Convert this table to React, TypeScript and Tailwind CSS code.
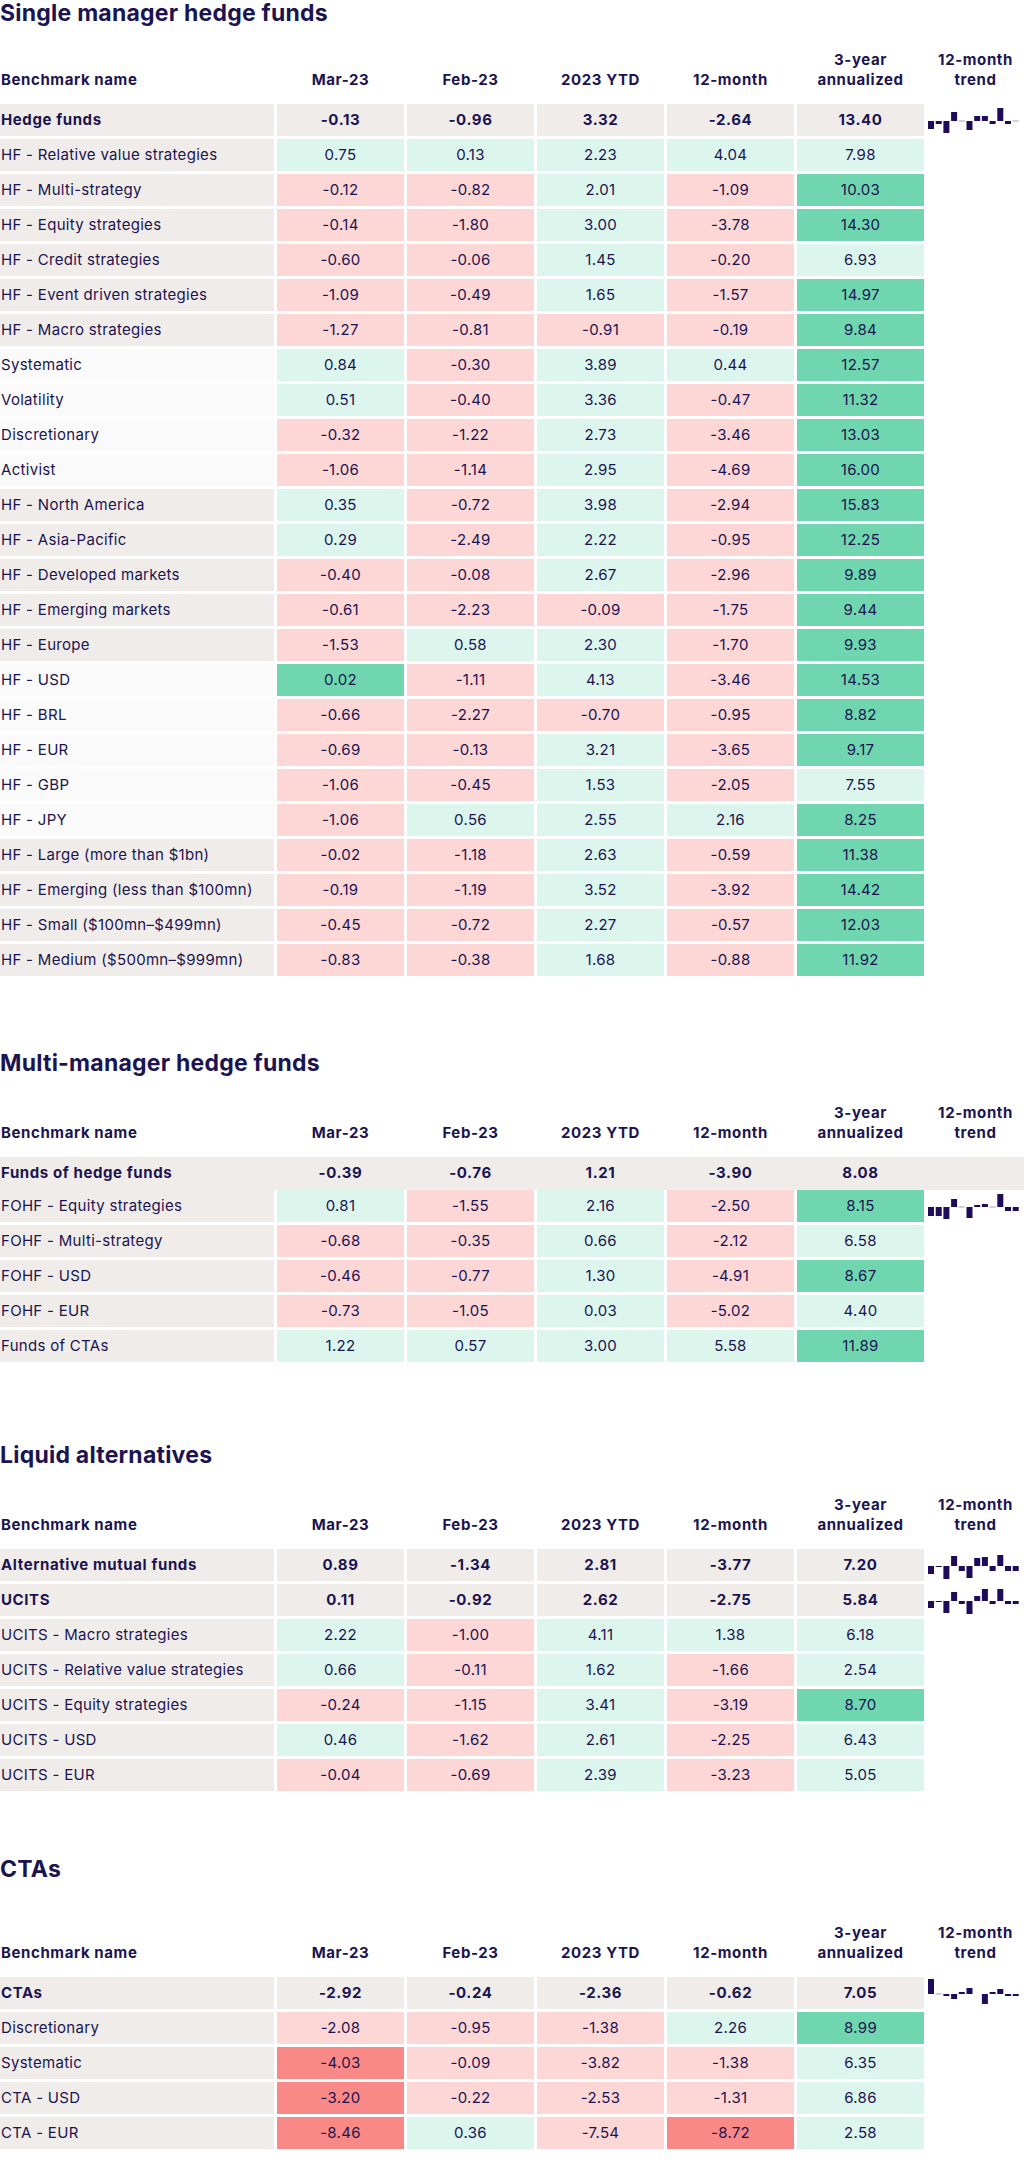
import clsx from "clsx"

type Row = {
  name: string
  vals: string[]
  codes?: string
  bold?: boolean
  light?: boolean
  spark?: (number | null)[]
}

type Section = {
  title: string
  mt: string
  headMt: string
  band?: boolean
  rows: Row[]
}

// m: mint, p: pink, G: green, r: red
const BG: Record<string, string> = {
  m: "bg-[#dcf6ed]",
  p: "bg-[#fdd6d6]",
  G: "bg-[#6fd6b0]",
  r: "bg-[#f98986]",
}

const GRID = "grid grid-cols-[274px_repeat(5,127px)_1fr] gap-x-[3px]"

const HEADERS = ["Mar-23", "Feb-23", "2023 YTD", "12-month"]

const SECTIONS: Section[] = [
  {
    title: "Single manager hedge funds",
    mt: "mt-0",
    headMt: "mt-[24px]",
    rows: [
      { name: "Hedge funds", vals: ["-0.13", "-0.96", "3.32", "-2.64", "13.40"], bold: true, spark: [-8, -3, -12, 9, 0, -9, 5, 5, -3, 13, -3, 0] },
      { name: "HF - Relative value strategies", vals: ["0.75", "0.13", "2.23", "4.04", "7.98"], codes: "mmmmm" },
      { name: "HF - Multi-strategy", vals: ["-0.12", "-0.82", "2.01", "-1.09", "10.03"], codes: "ppmpG" },
      { name: "HF - Equity strategies", vals: ["-0.14", "-1.80", "3.00", "-3.78", "14.30"], codes: "ppmpG" },
      { name: "HF - Credit strategies", vals: ["-0.60", "-0.06", "1.45", "-0.20", "6.93"], codes: "ppmpm" },
      { name: "HF - Event driven strategies", vals: ["-1.09", "-0.49", "1.65", "-1.57", "14.97"], codes: "ppmpG" },
      { name: "HF - Macro strategies", vals: ["-1.27", "-0.81", "-0.91", "-0.19", "9.84"], codes: "ppppG" },
      { name: "Systematic", vals: ["0.84", "-0.30", "3.89", "0.44", "12.57"], codes: "mpmmG", light: true },
      { name: "Volatility", vals: ["0.51", "-0.40", "3.36", "-0.47", "11.32"], codes: "mpmpG", light: true },
      { name: "Discretionary", vals: ["-0.32", "-1.22", "2.73", "-3.46", "13.03"], codes: "ppmpG", light: true },
      { name: "Activist", vals: ["-1.06", "-1.14", "2.95", "-4.69", "16.00"], codes: "ppmpG", light: true },
      { name: "HF - North America", vals: ["0.35", "-0.72", "3.98", "-2.94", "15.83"], codes: "mpmpG" },
      { name: "HF - Asia-Pacific", vals: ["0.29", "-2.49", "2.22", "-0.95", "12.25"], codes: "mpmpG" },
      { name: "HF - Developed markets", vals: ["-0.40", "-0.08", "2.67", "-2.96", "9.89"], codes: "ppmpG" },
      { name: "HF - Emerging markets", vals: ["-0.61", "-2.23", "-0.09", "-1.75", "9.44"], codes: "ppppG" },
      { name: "HF - Europe", vals: ["-1.53", "0.58", "2.30", "-1.70", "9.93"], codes: "pmmpG" },
      { name: "HF - USD", vals: ["0.02", "-1.11", "4.13", "-3.46", "14.53"], codes: "GpmpG", light: true },
      { name: "HF - BRL", vals: ["-0.66", "-2.27", "-0.70", "-0.95", "8.82"], codes: "ppppG", light: true },
      { name: "HF - EUR", vals: ["-0.69", "-0.13", "3.21", "-3.65", "9.17"], codes: "ppmpG", light: true },
      { name: "HF - GBP", vals: ["-1.06", "-0.45", "1.53", "-2.05", "7.55"], codes: "ppmpm", light: true },
      { name: "HF - JPY", vals: ["-1.06", "0.56", "2.55", "2.16", "8.25"], codes: "pmmmG", light: true },
      { name: "HF - Large (more than $1bn)", vals: ["-0.02", "-1.18", "2.63", "-0.59", "11.38"], codes: "ppmpG" },
      { name: "HF - Emerging (less than $100mn)", vals: ["-0.19", "-1.19", "3.52", "-3.92", "14.42"], codes: "ppmpG" },
      { name: "HF - Small ($100mn–$499mn)", vals: ["-0.45", "-0.72", "2.27", "-0.57", "12.03"], codes: "ppmpG" },
      { name: "HF - Medium ($500mn–$999mn)", vals: ["-0.83", "-0.38", "1.68", "-0.88", "11.92"], codes: "ppmpG" },
    ],
  },
  {
    title: "Multi-manager hedge funds",
    mt: "mt-[74px]",
    headMt: "mt-[27px]",
    band: true,
    rows: [
      { name: "Funds of hedge funds", vals: ["-0.39", "-0.76", "1.21", "-3.90", "8.08"], bold: true },
      { name: "FOHF - Equity strategies", vals: ["0.81", "-1.55", "2.16", "-2.50", "8.15"], codes: "mpmpG", spark: [-9, -9, -12, 8, 0, -11, 2, 3, 0, 13, -4, -4] },
      { name: "FOHF - Multi-strategy", vals: ["-0.68", "-0.35", "0.66", "-2.12", "6.58"], codes: "ppmpm" },
      { name: "FOHF - USD", vals: ["-0.46", "-0.77", "1.30", "-4.91", "8.67"], codes: "ppmpG" },
      { name: "FOHF - EUR", vals: ["-0.73", "-1.05", "0.03", "-5.02", "4.40"], codes: "ppmpm" },
      { name: "Funds of CTAs", vals: ["1.22", "0.57", "3.00", "5.58", "11.89"], codes: "mmmmG" },
    ],
  },
  {
    title: "Liquid alternatives",
    mt: "mt-[80px]",
    headMt: "mt-[27px]",
    rows: [
      { name: "Alternative mutual funds", vals: ["0.89", "-1.34", "2.81", "-3.77", "7.20"], bold: true, spark: [-8, -1, -13, 10, -5, -12, 8, 9, -5, 11, -5, -5] },
      { name: "UCITS", vals: ["0.11", "-0.92", "2.62", "-2.75", "5.84"], bold: true, spark: [-7, -1, -12, 9, -3, -13, 5, 12, -3, 12, -3, -3] },
      { name: "UCITS - Macro strategies", vals: ["2.22", "-1.00", "4.11", "1.38", "6.18"], codes: "mpmmm" },
      { name: "UCITS - Relative value strategies", vals: ["0.66", "-0.11", "1.62", "-1.66", "2.54"], codes: "mpmpm" },
      { name: "UCITS - Equity strategies", vals: ["-0.24", "-1.15", "3.41", "-3.19", "8.70"], codes: "ppmpG" },
      { name: "UCITS - USD", vals: ["0.46", "-1.62", "2.61", "-2.25", "6.43"], codes: "mpmpm" },
      { name: "UCITS - EUR", vals: ["-0.04", "-0.69", "2.39", "-3.23", "5.05"], codes: "ppmpm" },
    ],
  },
  {
    title: "CTAs",
    mt: "mt-[65px]",
    headMt: "mt-[41px]",
    rows: [
      { name: "CTAs", vals: ["-2.92", "-0.24", "-2.36", "-0.62", "7.05"], bold: true, spark: [15, 0, -2, -5, 2, 6, null, -10, 2, 5, -2, -2] },
      { name: "Discretionary", vals: ["-2.08", "-0.95", "-1.38", "2.26", "8.99"], codes: "pppmG" },
      { name: "Systematic", vals: ["-4.03", "-0.09", "-3.82", "-1.38", "6.35"], codes: "rpppm" },
      { name: "CTA - USD", vals: ["-3.20", "-0.22", "-2.53", "-1.31", "6.86"], codes: "rpppm" },
      { name: "CTA - EUR", vals: ["-8.46", "0.36", "-7.54", "-8.72", "2.58"], codes: "rmprm" },
    ],
  },
]

const Spark = ({ data }: { data: (number | null)[] }) => (
  <svg width="96" height="32" viewBox="0 0 96 32" className="block">
    {data.map((v, i) => {
      if (v === null) return null
      const x = 1 + i * 7.7
      if (v === 0) {
        return <rect key={i} x={x} y={16.5} width={6} height={1} fill="#a59dc4" />
      }
      const h = Math.abs(v)
      return (
        <rect
          key={i}
          x={x}
          y={v > 0 ? 17 - h : 17}
          width={6}
          height={h}
          fill="#1e0b5c"
        />
      )
    })}
  </svg>
)

const Header = ({ mt }: { mt: string }) => (
  <div className={clsx(GRID, mt, "h-[40px] items-end text-[15px] font-bold leading-[20px] tracking-[0.04em]")}>
    <div className="pl-[1px]">Benchmark name</div>
    {HEADERS.map((h) => (
      <div key={h} className="text-center">
        {h}
      </div>
    ))}
    <div className="text-center">
      3-year
      <br />
      annualized
    </div>
    <div className="text-center">
      12-month
      <br />
      trend
    </div>
  </div>
)

const TableRow = ({ row, band }: { row: Row; band?: boolean }) => {
  if (band) {
    return (
      <div className={clsx(GRID, "-mb-[3px] h-[33px] items-center bg-[#f0ece9] font-bold tracking-[0.04em]")}>
        <div className="pl-[1px]">{row.name}</div>
        {row.vals.map((v, i) => (
          <div key={i} className="text-center">
            {v}
          </div>
        ))}
        <div />
      </div>
    )
  }

  return (
    <div className={clsx(GRID, "h-[32px]")}>
      <div
        className={clsx(
          "flex items-center pl-[1px]",
          row.light ? "bg-[#fafafa]" : "bg-[#f0ece9]",
          row.bold && "font-bold tracking-[0.04em]",
        )}
      >
        {row.name}
      </div>
      {row.vals.map((v, i) => (
        <div
          key={i}
          className={clsx(
            "flex items-center justify-center",
            row.bold ? "bg-[#f0ece9] font-bold tracking-[0.04em]" : BG[row.codes?.[i] ?? "m"],
          )}
        >
          {v}
        </div>
      ))}
      <div className="flex items-center">{row.spark && <Spark data={row.spark} />}</div>
    </div>
  )
}

export default function App() {
  return (
    <div className="w-[1024px] bg-white pb-[11px] font-['Inter','Liberation_Sans',sans-serif] text-[15px] tracking-[0.02em] text-[#1b1450]">
      {SECTIONS.map((s) => (
        <section key={s.title} className={s.mt}>
          <h2 className="text-[23px] font-bold leading-[26px] tracking-[0.01em]">{s.title}</h2>
          <Header mt={s.headMt} />
          <div className="mt-[14px] flex flex-col gap-[3px]">
            {s.rows.map((r, i) => (
              <TableRow key={r.name + i} row={r} band={s.band && i === 0} />
            ))}
          </div>
        </section>
      ))}
    </div>
  )
}
